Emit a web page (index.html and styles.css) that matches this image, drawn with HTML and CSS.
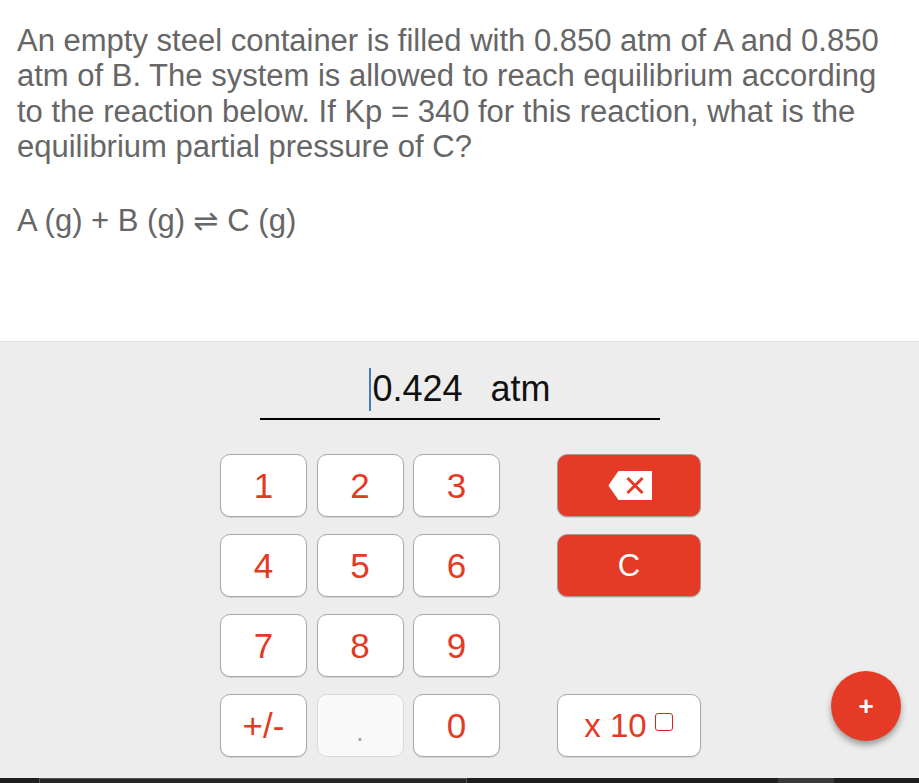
FILE: index.html
```html
<!DOCTYPE html>
<html lang="en">
<head>
<meta charset="utf-8">
<title>Equilibrium question</title>
<link rel="stylesheet" href="styles.css">
</head>
<body>
<div class="page">
  <section class="question">
    <p class="prompt">An empty steel container is filled with 0.850 atm of A and 0.850 atm of B. The system is allowed to reach equilibrium according to the reaction below. If Kp = 340 for this reaction, what is the equilibrium partial pressure of C?</p>
    <p class="equation">A (g) + B (g) <span class="arrow">⇌</span> C (g)</p>
  </section>
  <section class="keypad-panel">
    <div class="answer">
      <span class="caret"></span><span class="value">0.424</span><span class="unit">atm</span>
    </div>
    <div class="keys">
      <div class="digits">
        <button class="key">1</button>
        <button class="key">2</button>
        <button class="key">3</button>
        <button class="key">4</button>
        <button class="key">5</button>
        <button class="key">6</button>
        <button class="key">7</button>
        <button class="key">8</button>
        <button class="key">9</button>
        <button class="key">+/-</button>
        <button class="key key-disabled">.</button>
        <button class="key">0</button>
      </div>
      <div class="actions">
        <button class="action action-red">
          <svg class="backspace" viewBox="0 0 44 29" width="44" height="29" aria-hidden="true">
            <path d="M10.5 0H44V29H10.5L1 15.6a2 2 0 0 1 0-2.2Z" fill="#ffffff"/>
            <path d="M20.5 8L33.5 21M33.5 8L20.5 21" stroke="#e53b26" stroke-width="3" stroke-linecap="square" fill="none"/>
          </svg>
        </button>
        <button class="action action-red clear">C</button>
        <div class="action-spacer"></div>
        <button class="action exp">x 10<span class="exp-box"></span></button>
      </div>
    </div>
    <button class="fab">+</button>
  </section>
  <footer class="taskbar">
    <div class="task task-wide"></div>
    <div class="task task-small"></div>
  </footer>
</div>
</body>
</html>
```

FILE: styles.css
```css
html, body {
  margin: 0;
  padding: 0;
}

body {
  font-family: "Liberation Sans", Arial, "DejaVu Sans", sans-serif;
  background: #ededed;
}

.page {
  width: 919px;
  height: 783px;
  display: flex;
  flex-direction: column;
  overflow: hidden;
}

.question {
  background: #ffffff;
  height: 342px;
  box-sizing: border-box;
  padding: 23px 17px 0 17px;
  border-bottom: 1px solid #dedede;
  color: #666666;
  font-size: 31px;
  line-height: 35.4px;
}

.question p {
  margin: 0;
}

.equation {
  margin-top: 38px !important;
}

.arrow {
  font-family: "DejaVu Sans", sans-serif;
  font-size: 30px;
  line-height: 30px;
}

.keypad-panel {
  position: relative;
  flex: 1;
  background: #ededed;
  padding-top: 26px;
  display: flex;
  flex-direction: column;
  align-items: center;
}

.answer {
  width: 400px;
  height: 50px;
  border-bottom: 2px solid #000;
  display: flex;
  justify-content: center;
  align-items: flex-start;
  font-size: 36px;
  color: #111;
  line-height: 42px;
  margin-left: 1px;
}

.caret {
  display: inline-block;
  width: 2px;
  height: 43px;
  background: #3f7fc0;
  margin-right: 1px;
}

.unit {
  margin-left: 28px;
}

.keys {
  margin-top: 34px;
  display: flex;
  gap: 57px;
  margin-left: 2px;
}

.digits {
  display: grid;
  grid-template-columns: repeat(3, 87px);
  grid-auto-rows: 63px;
  column-gap: 9.5px;
  row-gap: 17px;
}

.key,
.action {
  font-family: "Liberation Sans", Arial, sans-serif;
  box-sizing: border-box;
  border: 1px solid #a8a8a8;
  border-radius: 10px;
  background: #ffffff;
  box-shadow: 0 1px 1px rgba(0, 0, 0, 0.12);
  padding: 0;
  margin: 0;
  display: flex;
  align-items: center;
  justify-content: center;
}

.key {
  color: #e33a24;
  font-size: 35px;
}

.key-disabled {
  background: #f9f9f9;
  border-color: #dadada;
  box-shadow: none;
  color: #a8a8a8;
  font-size: 28px;
  padding-top: 12px;
}

.actions {
  display: grid;
  grid-template-columns: 144px;
  grid-auto-rows: 63px;
  row-gap: 17px;
}

.action-red {
  background: #e53b26;
  border-color: #a89a98;
  color: #ffffff;
}

.backspace {
  display: block;
  margin-left: 1px;
}

.clear {
  font-size: 31px;
}

.exp {
  color: #e33a24;
  font-size: 33px;
  align-items: center;
  padding-right: 1px;
}

.exp-box {
  display: inline-block;
  width: 18px;
  height: 18px;
  box-sizing: border-box;
  border: 1.5px solid #ee1c1c;
  border-radius: 3px;
  margin-left: 8px;
  align-self: flex-start;
  margin-top: 18px;
}

.fab {
  position: absolute;
  left: 831px;
  top: 329px;
  width: 70px;
  height: 70px;
  border-radius: 50%;
  border: none;
  background: #e53b26;
  color: #ffffff;
  font-family: "Liberation Sans", Arial, sans-serif;
  font-size: 26px;
  font-weight: bold;
  line-height: 70px;
  padding: 0;
  box-shadow: 0 4px 6px rgba(0, 0, 0, 0.35);
}

.taskbar {
  height: 5px;
  background: #1f1f1f;
  display: flex;
  align-items: flex-start;
  flex-shrink: 0;
}

.task {
  height: 5px;
  box-sizing: border-box;
  background: #262626;
  border-top: 1px solid #555555;
}

.task-wide {
  margin-left: 39px;
  width: 428px;
  border-left: 1px solid #555;
  border-right: 1px solid #555;
}

.task-small {
  margin-left: 311px;
  width: 56px;
  background: #3a3a3a;
  border-top: none;
}
```
